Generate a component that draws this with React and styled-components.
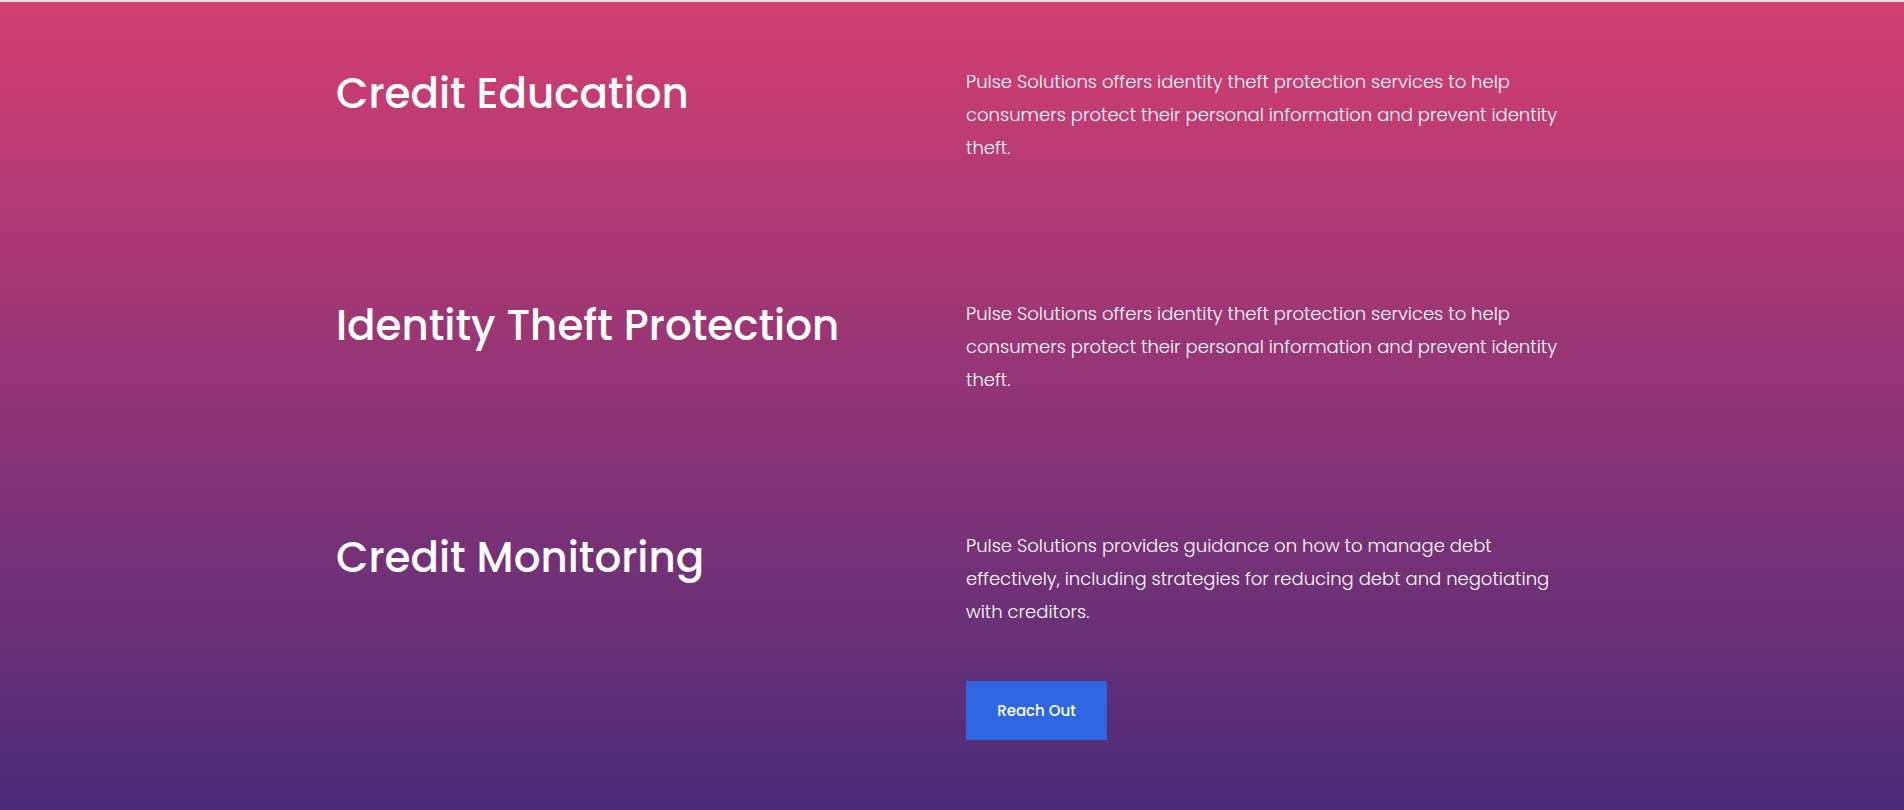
import React from 'react';
import styled, { createGlobalStyle } from 'styled-components';

const GlobalStyle = createGlobalStyle`
  html, body {
    margin: 0;
    padding: 0;
  }
  body {
    font-family: Poppins, "Noto Sans", "Open Sans", sans-serif;
    background: #4a2c7a;
  }
  * {
    box-sizing: border-box;
  }
`;

const services = [
  {
    title: 'Credit Education',
    text: 'Pulse Solutions offers identity theft protection services to help consumers protect their personal information and prevent identity theft.',
  },
  {
    title: 'Identity Theft Protection',
    text: 'Pulse Solutions offers identity theft protection services to help consumers protect their personal information and prevent identity theft.',
  },
  {
    title: 'Credit Monitoring',
    text: 'Pulse Solutions provides guidance on how to manage debt effectively, including strategies for reducing debt and negotiating with creditors.',
    cta: 'Reach Out',
  },
];

export default function App() {
  return (
    <>
      <GlobalStyle />
      <Section>
        <Inner>
          {services.map((s) => (
            <Row key={s.title}>
              <Title>{s.title}</Title>
              <Body>
                <Text>{s.text}</Text>
                {s.cta && <Button type="button">{s.cta}</Button>}
              </Body>
            </Row>
          ))}
        </Inner>
      </Section>
    </>
  );
}

const Section = styled.section`
  min-height: 810px;
  border-top: 2px solid #e9dce3;
  background: linear-gradient(180deg, #d43f71 0%, #8f3476 50%, #4a2c79 100%);
  padding: 67px 0 60px;
`;

const Inner = styled.div`
  width: 1232px;
  margin: 0 auto;
  display: flex;
  flex-direction: column;
  gap: 137px;
`;

const Row = styled.div`
  display: grid;
  grid-template-columns: 630px 1fr;
  align-items: start;
`;

const Title = styled.h2`
  margin: 0;
  color: #ffffff;
  font-size: 42px;
  font-weight: 500;
  line-height: 1.2;
`;

const Body = styled.div`
  display: flex;
  flex-direction: column;
  align-items: flex-start;
`;

const Text = styled.p`
  margin: 0;
  margin-top: -4px;
  max-width: 610px;
  color: #ffffff;
  font-size: 18px;
  line-height: 33px;
  font-weight: 300;
`;

const Button = styled.button`
  margin-top: 53px;
  width: 141px;
  height: 59px;
  border: none;
  background: #2f66e2;
  color: #ffffff;
  font-family: inherit;
  font-size: 15px;
  font-weight: 500;
  cursor: pointer;
`;
